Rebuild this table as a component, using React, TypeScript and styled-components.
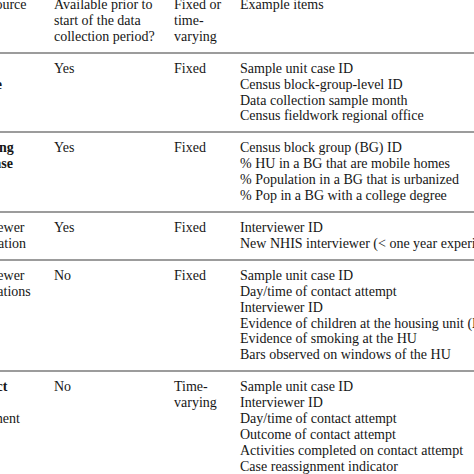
import React from "react";
import styled, { createGlobalStyle } from "styled-components";

const GlobalStyle = createGlobalStyle`
  html, body {
    margin: 0;
    padding: 0;
    background: #ffffff;
    overflow: hidden;
  }
  body {
    font-family: "Liberation Serif", "Times New Roman", serif;
    color: #161616;
  }
`;

const Page = styled.div`
  width: 474px;
  height: 474px;
  overflow: hidden;
  background: #ffffff;
`;

const Table = styled.div`
  width: 680px;
  margin: -10px 0 0 -40px;
  display: flex;
  flex-direction: column;
`;

const Row = styled.div<{ $ruled?: boolean }>`
  display: grid;
  grid-template-columns: 94px 120px 66px 1fr;
  padding: 7px 0;
  border-top: ${(p) => (p.$ruled ? "2px solid #9c9c9c" : "none")};
`;

const Cell = styled.div`
  font-size: 14px;
  line-height: 15.9px;
  white-space: nowrap;
`;

const Item = styled.div`
  white-space: nowrap;
`;

const Strong = styled.span`
  font-weight: bold;
`;

type Source = {
  label: React.ReactNode;
  prior: string;
  kind: React.ReactNode;
  items: string[];
};

const sources: Source[] = [
  {
    label: (
      <>
        <Strong>Area</Strong>
        <br />
        <Strong>sample</Strong>
      </>
    ),
    prior: "Yes",
    kind: "Fixed",
    items: [
      "Sample unit case ID",
      "Census block-group-level ID",
      "Data collection sample month",
      "Census fieldwork regional office",
    ],
  },
  {
    label: (
      <>
        <Strong>Planning</Strong>
        <br />
        <Strong>database</Strong>
      </>
    ),
    prior: "Yes",
    kind: "Fixed",
    items: [
      "Census block group (BG) ID",
      "% HU in a BG that are mobile homes",
      "% Population in a BG that is urbanized",
      "% Pop in a BG with a college degree",
    ],
  },
  {
    label: (
      <>
        Interviewer
        <br />
        information
      </>
    ),
    prior: "Yes",
    kind: "Fixed",
    items: ["Interviewer ID", "New NHIS interviewer (< one year experience)"],
  },
  {
    label: (
      <>
        Interviewer
        <br />
        observations
      </>
    ),
    prior: "No",
    kind: "Fixed",
    items: [
      "Sample unit case ID",
      "Day/time of contact attempt",
      "Interviewer ID",
      "Evidence of children at the housing unit (HU)",
      "Evidence of smoking at the HU",
      "Bars observed on windows of the HU",
    ],
  },
  {
    label: (
      <>
        <Strong>Contact</Strong>
        <br />
        history
        <br />
        instrument
      </>
    ),
    prior: "No",
    kind: (
      <>
        Time-
        <br />
        varying
      </>
    ),
    items: [
      "Sample unit case ID",
      "Interviewer ID",
      "Day/time of contact attempt",
      "Outcome of contact attempt",
      "Activities completed on contact attempt",
      "Case reassignment indicator",
    ],
  },
];

export default function App() {
  return (
    <>
      <GlobalStyle />
      <Page>
        <Table>
          <Row>
            <Cell>Data source</Cell>
            <Cell>
              Available prior to
              <br />
              start of the data
              <br />
              collection period?
            </Cell>
            <Cell>
              Fixed or
              <br />
              time-
              <br />
              varying
            </Cell>
            <Cell>Example items</Cell>
          </Row>
          {sources.map((s, i) => (
            <Row key={i} $ruled>
              <Cell>{s.label}</Cell>
              <Cell>{s.prior}</Cell>
              <Cell>{s.kind}</Cell>
              <Cell>
                {s.items.map((item, j) => (
                  <Item key={j}>{item}</Item>
                ))}
              </Cell>
            </Row>
          ))}
        </Table>
      </Page>
    </>
  );
}
